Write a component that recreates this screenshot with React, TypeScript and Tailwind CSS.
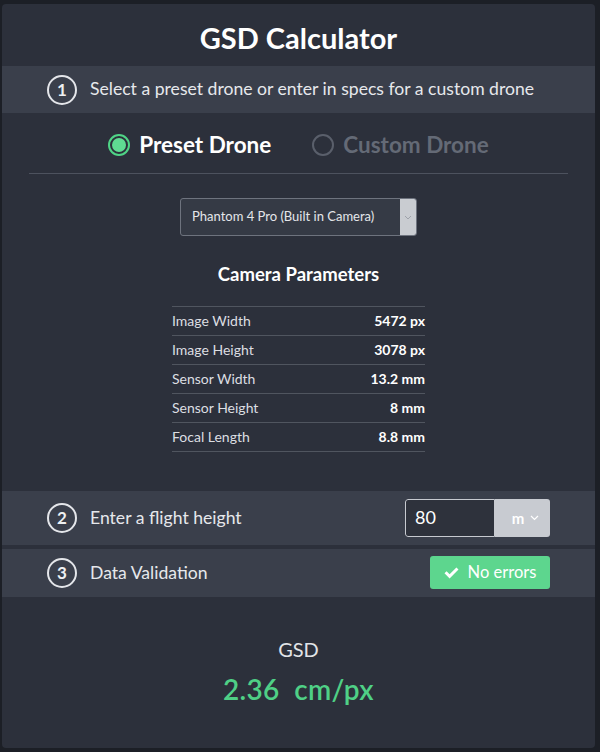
import React, { useState } from 'react';

const params = [
    { label: 'Image Width', value: '5472 px' },
    { label: 'Image Height', value: '3078 px' },
    { label: 'Sensor Width', value: '13.2 mm' },
    { label: 'Sensor Height', value: '8 mm' },
    { label: 'Focal Length', value: '8.8 mm' },
];

const StepBadge: React.FC<{ n: number }> = ({ n }) => (
    <div className="w-[30px] h-[30px] rounded-full border-2 border-[#e4e6ea] flex items-center justify-center text-[17px] font-bold text-[#eef0f2] leading-none">
        {n}
    </div>
);

const App: React.FC = () => {
    const [mode, setMode] = useState<'preset' | 'custom'>('preset');

    return (
        <div className="w-[600px] h-[752px] bg-[#1c1f26] pt-[4px] pl-[2px] pr-[5px] pb-[4px]" style={{ fontFamily: 'Lato, "Open Sans", sans-serif' }}>
            <div className="h-full bg-[#2c303b] rounded-[4px] flex flex-col text-[#e8eaed]">
                <h1 className="h-[62px] flex items-center justify-center text-[29px] font-bold text-white pt-[6px]">GSD Calculator</h1>

                <div className="h-[47px] bg-[#3a3f4b] flex items-center pl-[45px] gap-[13px]">
                    <StepBadge n={1} />
                    <span className="text-[17.6px] text-[#e6e8eb]">Select a preset drone or enter in specs for a custom drone</span>
                </div>

                <div className="mx-[27px] h-[61px] border-b border-[#4d525e] flex items-center justify-center gap-[41px] pt-[3px]">
                    <button onClick={() => setMode('preset')} className="flex items-center gap-[9px]">
                        <span className={`w-[22px] h-[22px] rounded-full border-2 flex items-center justify-center ${mode === 'preset' ? 'border-[#4fd486]' : 'border-[#5a5f6b]'}`}>
                            {mode === 'preset' && <span className="w-[14px] h-[14px] rounded-full bg-[#5fdc92]" />}
                        </span>
                        <span className={`text-[22.5px] font-bold ${mode === 'preset' ? 'text-white' : 'text-[#646a76]'}`}>Preset Drone</span>
                    </button>
                    <button onClick={() => setMode('custom')} className="flex items-center gap-[9px]">
                        <span className={`w-[22px] h-[22px] rounded-full border-2 flex items-center justify-center ${mode === 'custom' ? 'border-[#4fd486]' : 'border-[#5a5f6b]'}`}>
                            {mode === 'custom' && <span className="w-[14px] h-[14px] rounded-full bg-[#5fdc92]" />}
                        </span>
                        <span className={`text-[22.5px] font-bold ${mode === 'custom' ? 'text-white' : 'text-[#646a76]'}`}>Custom Drone</span>
                    </button>
                </div>

                <div className="flex flex-col items-center pt-[24px]">
                    <div className="w-[237px] h-[38px] rounded-[3px] border border-[#6e737e] bg-[#353a45] flex overflow-hidden">
                        <div className="flex-1 flex items-center pl-[11px] text-[13px] text-[#e4e6ea]">Phantom 4 Pro (Built in Camera)</div>
                        <div className="w-[16px] bg-[#c9ccd1] flex items-center justify-center">
                            <svg width="8" height="5" viewBox="0 0 8 5" fill="none"><path d="M1 1l3 3 3-3" stroke="#9ea2aa" strokeWidth="1" /></svg>
                        </div>
                    </div>

                    <h2 className="mt-[25px] text-[18.5px] font-bold text-white">Camera Parameters</h2>

                    <div className="mt-[17px] w-[253px] border-t border-[#50555f]">
                        {params.map(p => (
                            <div key={p.label} className="h-[29px] border-b border-[#50555f] flex items-center justify-between text-[14px]">
                                <span className="text-[#dcdee2]">{p.label}</span>
                                <span className="font-bold text-white">{p.value}</span>
                            </div>
                        ))}
                    </div>
                </div>

                <div className="mt-[39px] h-[54px] bg-[#3a3f4b] flex items-center pl-[45px] pr-[45px] gap-[13px]">
                    <StepBadge n={2} />
                    <span className="text-[17.6px] text-[#e6e8eb] flex-1">Enter a flight height</span>
                    <div className="flex h-[38px] rounded-[3px] overflow-hidden">
                        <div className="w-[90px] border border-[#c7cad0] rounded-l-[3px] bg-[#2e323c] flex items-center pl-[9px] text-[18px] text-white">80</div>
                        <div className="w-[55px] bg-[#c8cbd1] flex items-center justify-center gap-[6px] text-[15px] font-bold text-white pl-[6px]">
                            m
                            <svg width="9" height="6" viewBox="0 0 9 6" fill="none"><path d="M1 1l3.5 3.5L8 1" stroke="#ffffff" strokeWidth="1.2" /></svg>
                        </div>
                    </div>
                </div>

                <div className="mt-[4px] h-[48px] bg-[#3a3f4b] flex items-center pl-[45px] pr-[45px] gap-[13px]">
                    <StepBadge n={3} />
                    <span className="text-[17.6px] text-[#e6e8eb] flex-1">Data Validation</span>
                    <div className="w-[120px] h-[33px] rounded-[3px] bg-[#5dd68e] flex items-center justify-center gap-[9px] text-[16.5px] text-white">
                        <svg width="15" height="12" viewBox="0 0 15 12" fill="#ffffff"><path d="M0.5 6.3L2.6 4.2 5.6 7.2 12.4 0.4 14.5 2.5 5.6 11.4z" /></svg>
                        No errors
                    </div>
                </div>

                <div className="flex-1 flex flex-col items-center pt-[37px]">
                    <div className="text-[20px] text-[#e2e4e8]">GSD</div>
                    <div className="mt-[4px] text-[28px] font-semibold text-[#4fd086] tracking-[0.3px]">2.36&nbsp;&nbsp;cm/px</div>
                </div>
            </div>
        </div>
    );
};

export default App;
